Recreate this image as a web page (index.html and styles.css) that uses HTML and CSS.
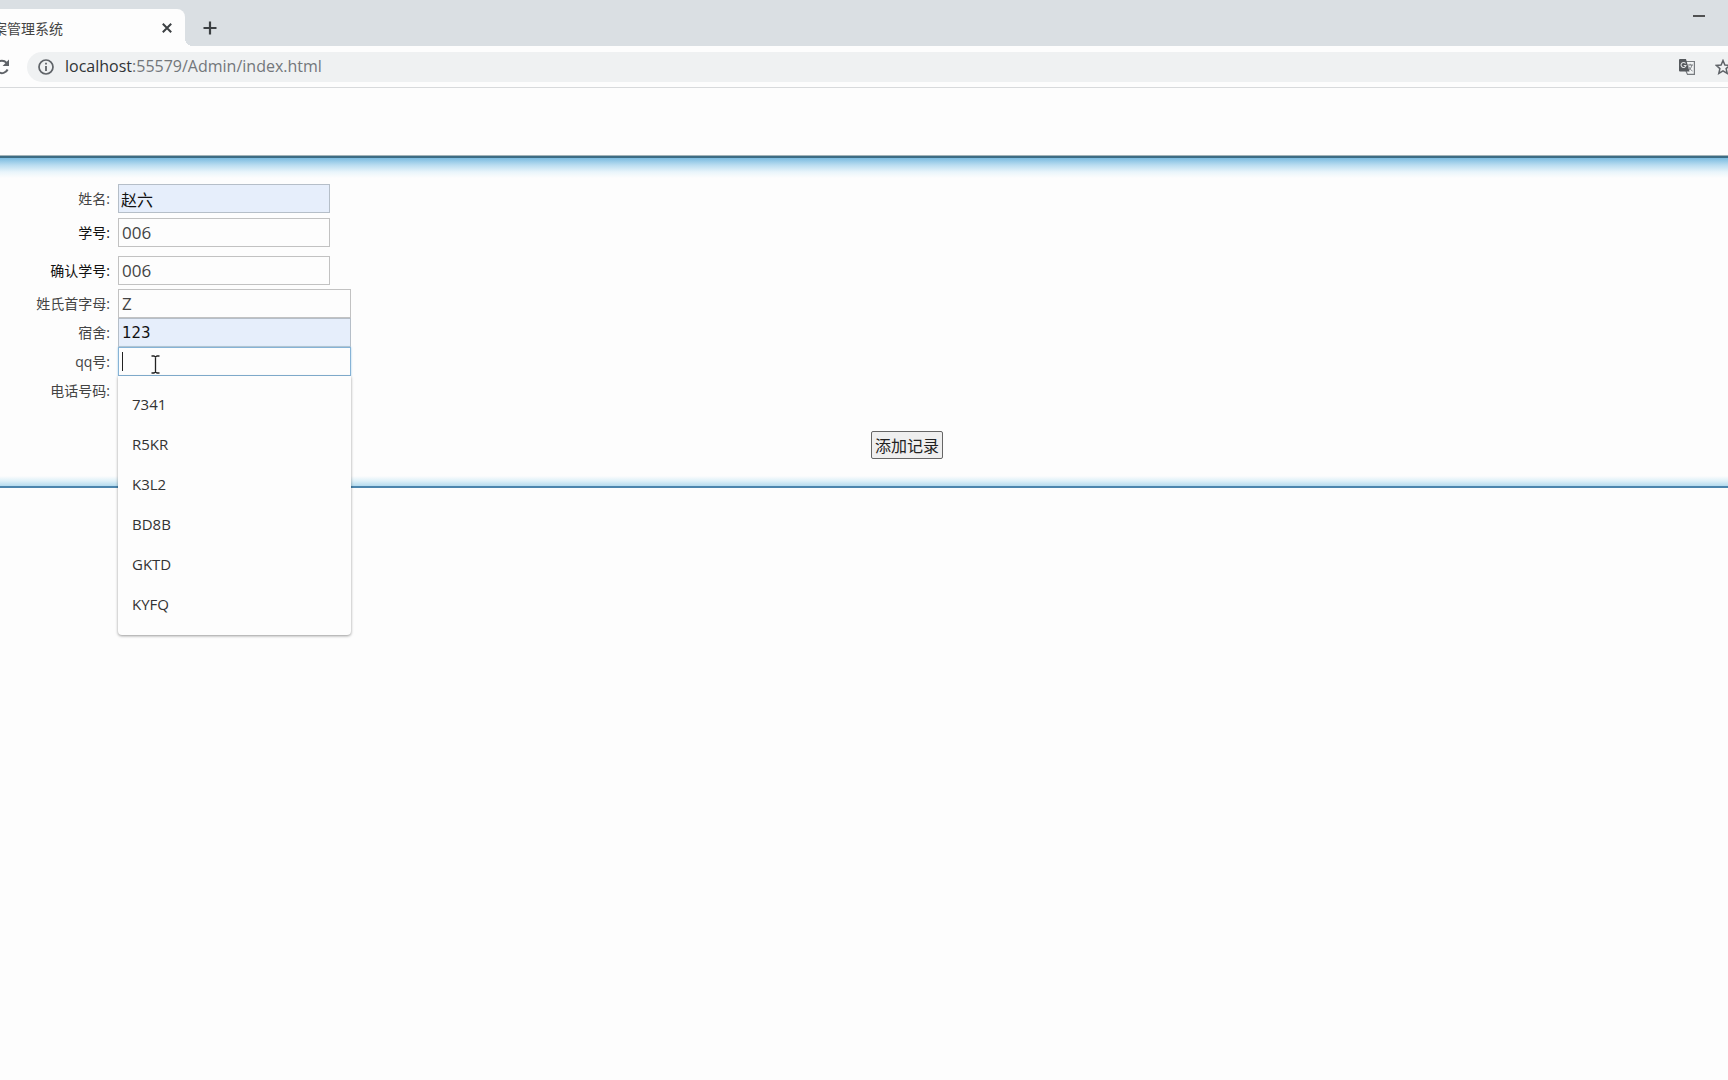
FILE: index.html
```html
<!DOCTYPE html>
<html lang="zh-CN">
<head>
<meta charset="utf-8">
<title>案管理系统</title>
<link rel="stylesheet" href="styles.css">
</head>
<body>
<header class="browser">
  <div class="tabstrip">
    <div class="tab">
      <span class="tab-title">案管理系统</span>
      <button class="icon-button" type="button" aria-label="关闭标签页">
        <svg width="12" height="12" viewBox="0 0 12 12"><path d="M1.800 1.800L10.200 10.200M10.200 1.800L1.800 10.200" stroke="#3c4043" stroke-width="2"/></svg>
      </button>
    </div>
    <button class="icon-button new-tab" type="button" aria-label="新标签页">
      <svg width="14" height="14" viewBox="0 0 14 14"><path d="M7 0.500V13.500M0.500 7H13.500" stroke="#3c4043" stroke-width="2.200"/></svg>
    </button>
    <button class="icon-button minimize" type="button" aria-label="最小化">
      <svg width="12" height="12" viewBox="0 0 12 12"><path d="M0 6H12" stroke="#222" stroke-width="1.500"/></svg>
    </button>
  </div>
  <div class="toolbar">
    <button class="icon-button" type="button" aria-label="重新加载">
      <svg width="10" height="16" viewBox="6 0 10 16"><path d="M13.600 10.500A6.200 6.200 0 1 1 12.600 3.800" fill="none" stroke="#5f6368" stroke-width="2"/><path d="M15 0.600V7H8.600Z" fill="#5f6368"/></svg>
    </button>
    <div class="omnibox">
      <svg width="16" height="16" viewBox="0 0 16 16"><circle cx="8" cy="8" r="7" fill="none" stroke="#5f6368" stroke-width="1.700"/><path d="M8 7V12M8 3.800V5.600" stroke="#5f6368" stroke-width="1.800"/></svg>
      <div class="url"><span class="host">localhost</span>:55579/Admin/index.html</div>
      <button class="icon-button" type="button" aria-label="翻译此网页">
        <svg width="16" height="16" viewBox="0 0 16 16"><path d="M6 2.500H15.400V15.400H8.500L7 12" fill="#f1f3f4" stroke="#777b7f" stroke-width="1.200"/><path d="M8.500 6H14M11.200 4.800V6M12.800 6C12.500 8.500 11 10.500 9 11.800M9.700 7.500C10.500 9.500 11.800 11 13.500 12" fill="none" stroke="#777b7f"/><path d="M1 0H7L10.500 12.500H1Q0 12.500 0 11.500V1Q0 0 1 0Z" fill="#55595d"/><path d="M6.600 4.500A2.500 2.500 0 1 0 7 6.500H4.700" fill="none" stroke="#dfe1e3" stroke-width="1.100"/></svg>
      </button>
      <button class="icon-button star" type="button" aria-label="为此网页添加书签">
        <svg width="13" height="16" viewBox="0 0 13 16"><path d="M8 1.500L9.900 6L14.800 6.400L11.100 9.600L12.200 14.400L8 11.800L3.800 14.400L4.900 9.600L1.200 6.400L6.100 6Z" fill="none" stroke="#5f6368" stroke-width="1.500"/></svg>
      </button>
    </div>
  </div>
</header>
<main>
  <div class="banner"></div>
  <form class="panel">
    <div class="row row-name">
      <label for="name">姓名:</label>
      <input class="field filled chinese" id="name" type="text" value="赵六">
    </div>
    <div class="row row-number strong">
      <label for="number">学号:</label>
      <input class="field" id="number" type="text" value="006">
    </div>
    <div class="row row-confirm strong">
      <label for="confirm">确认学号:</label>
      <input class="field" id="confirm" type="text" value="006">
    </div>
    <div class="row">
      <label for="initial">姓氏首字母:</label>
      <input class="field wide" id="initial" type="text" value="Z">
    </div>
    <div class="row">
      <label for="dorm">宿舍:</label>
      <input class="field wide filled" id="dorm" type="text" value="123">
    </div>
    <div class="row">
      <label for="qq">qq号:</label>
      <div class="combo">
        <input class="field wide active" id="qq" type="text">
        <span class="caret"></span>
        <svg class="pointer" width="9" height="19" viewBox="0 0 9 19"><path d="M0.500 1H3L4.500 2L6 1H8.500M4.500 2V17M0.500 18H3L4.500 17L6 18H8.500" fill="none" stroke="#222" stroke-width="1.300"/></svg>
        <ul class="suggestions">
          <li>7341</li>
          <li>R5KR</li>
          <li>K3L2</li>
          <li>BD8B</li>
          <li>GKTD</li>
          <li>KYFQ</li>
        </ul>
      </div>
    </div>
    <div class="row">
      <span class="label">电话号码:</span>
    </div>
    <div class="actions"><button class="submit" type="button">添加记录</button></div>
  </form>
</main>
</body>
</html>
```
FILE: styles.css
```css
* { box-sizing: border-box; }

body {
  min-height: 100vh;
  margin: 0;
  background: #fdfdfd;
  color: #444;
  font-family: "Open Sans", "Noto Sans CJK SC", sans-serif;
  font-size: 14px;
}

svg { display: block; flex: none; }

.icon-button {
  padding: 0;
  border: 0;
  background: none;
  flex: none;
}

.tabstrip {
  display: flex;
  align-items: flex-end;
  height: 46px;
  background: #dadfe3;
}

.tab {
  position: relative;
  display: flex;
  align-items: center;
  justify-content: flex-end;
  gap: 98px;
  width: 185px;
  height: 37px;
  padding-right: 12px;
  border-top-right-radius: 8px;
  background: #fdfdfd;
}

.tab::after {
  content: "";
  position: absolute;
  left: 100%;
  bottom: 0;
  width: 8px;
  height: 8px;
  background: radial-gradient(circle at 100% 0, transparent 8px, #fdfdfd 8px);
}

.tab-title { flex: none; white-space: nowrap; }

.new-tab { margin: 0 auto 11px 18px; }

.minimize { margin: 0 23px 24px 0; }

.toolbar {
  display: flex;
  align-items: center;
  gap: 17px;
  height: 42px;
  border-bottom: 1px solid #d8dadc;
}

.omnibox {
  display: flex;
  flex: 1;
  align-items: center;
  height: 30px;
  padding-left: 11px;
  border-radius: 15px 0 0 15px;
  background: #eff1f2;
}

.url {
  flex: 1;
  margin-left: 11px;
  padding-bottom: 2px;
  color: #73777b;
  font-size: 16px;
  line-height: 24px;
}

.host { color: #303336; }

.star { margin-left: 20px; }

.banner { height: 66px; }

.panel {
  padding: 26px 0 27px;
  border-top: 2px solid #3d6c84;
  border-bottom: 2px solid #4c85ad;
  box-shadow: 0 -1px 0 #a3b3b8;
  margin-top: 2px;
  background:
    linear-gradient(#7abbe0, #b9dcf0 35%, #e9f5fb 70%, #fdfdfd) top / 100% 20px no-repeat,
    linear-gradient(#fdfdfd, #def0f8 50%, #b5dbee) bottom / 100% 10px no-repeat;
}

.row {
  display: flex;
  align-items: center;
  gap: 8px;
  min-height: 29px;
}

.row-name { margin-bottom: 5px; }
.row-number { margin-bottom: 9px; }
.row-confirm { margin-bottom: 4px; }

.row label,
.label {
  width: 110px;
  line-height: 20px;
  text-align: right;
}

.strong label { color: #111; }

.field {
  display: block;
  width: 212px;
  height: 29px;
  padding: 0 3px;
  border: 1px solid #c2c2c2;
  background: #fdfdfd;
  color: #444;
  font-family: "Open Sans", "Noto Sans CJK SC", sans-serif;
  font-size: 17px;
  outline: 0;
}

.wide { width: 233px; }

.filled {
  border-color: #b5bec8;
  background: #e6eefb;
  color: #111;
  font-family: "DejaVu Sans", "Noto Sans CJK SC", sans-serif;
  font-size: 15px;
}

.chinese {
  padding: 0 2px;
  font-family: "Noto Sans CJK SC", sans-serif;
  font-size: 16px;
}

.active {
  border-color: #86b3d6;
  box-shadow: 0 0 2px #a9cfea;
}

.combo { position: relative; }

.caret {
  position: absolute;
  left: 4px;
  top: 5px;
  width: 1px;
  height: 19px;
  background: #222;
}

.pointer {
  position: absolute;
  left: 33px;
  top: 8px;
}

.suggestions {
  position: absolute;
  top: 100%;
  left: 0;
  right: 0;
  z-index: 1;
  margin: 0;
  padding: 8px 14px 11px;
  border-radius: 0 0 4px 4px;
  background: #fdfdfd;
  box-shadow: 0 1px 3px rgba(0, 0, 0, 0.4);
  color: #333;
  font-size: 15px;
  line-height: 40px;
  list-style: none;
}

.actions {
  padding: 26px 0 0 86px;
  text-align: center;
}

.submit {
  height: 28px;
  padding: 0 3px;
  border: 1px solid #666;
  border-radius: 2px;
  background: #efefef;
  color: #222;
  font-family: "Noto Sans CJK SC", sans-serif;
  font-size: 16px;
  line-height: 24px;
  vertical-align: top;
}
```
